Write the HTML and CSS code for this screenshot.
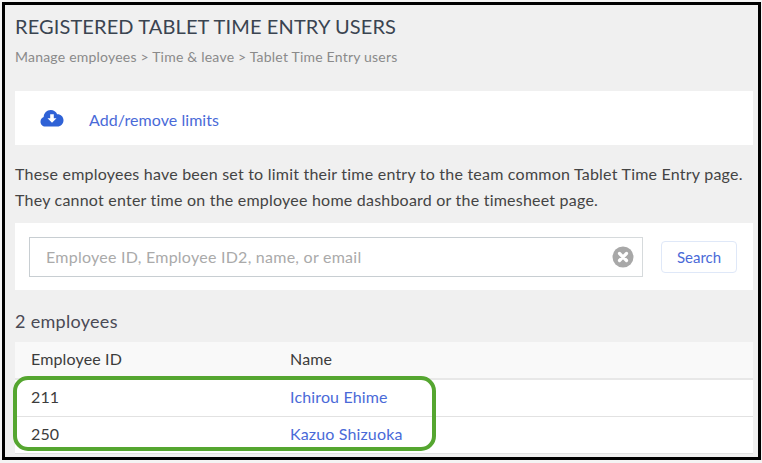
FILE: index.html
```html
<!DOCTYPE html>
<html lang="en">
<head>
    <meta charset="UTF-8">
    <title>Registered Tablet Time Entry Users</title>
    <link rel="stylesheet" href="styles.css">
</head>
<body>
    <div class="frame">
        <h1>REGISTERED TABLET TIME ENTRY USERS</h1>
        <p class="crumbs">Manage employees &gt; Time &amp; leave &gt; Tablet Time Entry users</p>

        <div class="panel limits">
            <svg class="cloud" width="24" height="18" viewBox="0 0 24 18">
                <path fill="#2f62d6" d="M5.5 17.5C2.4 17.5 0.5 15.3 0.5 12.7C0.5 10.5 1.8 8.8 3.7 8.1C3.7 4.2 6.8 1 10.8 1C13.7 1 16.1 2.7 17.2 5.2C20.6 5 23.5 7.7 23.5 11.2C23.5 14.7 20.8 17.5 17.4 17.5Z"/>
                <path fill="#fff" d="M10.2 5.2H13.8V9.2H16.5L12 13.8L7.5 9.2H10.2Z"/>
            </svg>
            <a href="#">Add/remove limits</a>
        </div>

        <p class="note">These employees have been set to limit their time entry to the team common Tablet Time Entry page.<br>They cannot enter time on the employee home dashboard or the timesheet page.</p>

        <div class="panel search">
            <div class="field">
                <span class="input">Employee ID, Employee ID2, name, or email</span>
                <span class="clear">
                    <svg width="22" height="22" viewBox="0 0 22 22">
                        <circle cx="11" cy="11" r="10.5" fill="#a8a8a8"/>
                        <path d="M7.5 7.5L14.5 14.5M14.5 7.5L7.5 14.5" stroke="#fff" stroke-width="3.2" stroke-linecap="round"/>
                    </svg>
                </span>
            </div>
            <button class="btn">Search</button>
        </div>

        <h2>2 employees</h2>

        <div class="table">
            <div class="row head"><span>Employee ID</span><span>Name</span></div>
            <div class="row"><span>211</span><a href="#">Ichirou Ehime</a></div>
            <div class="row"><span>250</span><a href="#">Kazuo Shizuoka</a></div>
            <div class="highlight"></div>
        </div>
    </div>
</body>
</html>
```

FILE: styles.css
```css
body {
    margin: 0;
    background: #f4f4f4;
    font-family: Lato, sans-serif;
    color: #3c3c3c;
}
a {
    color: #4a6ad8;
    text-decoration: none;
}
.frame {
    box-sizing: border-box;
    width: 759px;
    height: 458px;
    margin: 2px 0 0 2px;
    padding: 0 5px 0 10px;
    border: 3px solid #000;
    background: #f0f0f0;
}
h1 {
    margin: 0;
    padding-top: 9px;
    font-size: 20px;
    line-height: 24px;
    font-weight: 400;
    letter-spacing: 0.12px;
    color: #3a4450;
}
.crumbs {
    margin: 9px 0 0;
    font-size: 14px;
    line-height: 20px;
    letter-spacing: 0.21px;
    color: #8a8a8a;
}
.panel {
    background: #fff;
    display: flex;
    align-items: center;
}
.limits {
    height: 54px;
    margin-top: 24px;
    padding-left: 25px;
    font-size: 16px;
    letter-spacing: 0.05px;
}
.limits a {
    margin-top: 2px;
}
.cloud {
    margin-right: 25px;
}
.note {
    margin: 16px 0 0;
    font-size: 16px;
    line-height: 26px;
    letter-spacing: 0.22px;
    color: #444;
}
.search {
    height: 67px;
    margin-top: 10px;
    padding-left: 14px;
}
.field {
    width: 614px;
    height: 40px;
    display: flex;
    font-size: 16px;
    letter-spacing: 0.25px;
    color: #aaa;
}
.input {
    box-sizing: border-box;
    flex: 1;
    display: flex;
    align-items: center;
    padding-left: 16px;
    border: 1px solid #c8ced2;
    border-right: none;
}
.clear {
    box-sizing: border-box;
    width: 53px;
    display: flex;
    align-items: center;
    justify-content: flex-end;
    padding-right: 8px;
    border: 1px solid #d6dadc;
    border-left: none;
}
.btn {
    width: 76px;
    height: 32px;
    margin-left: 18px;
    border: 1px solid #dfe8f8;
    border-radius: 4px;
    background: #fff;
    color: #4a6ad8;
    font-family: Lato, sans-serif;
    font-size: 15px;
}
h2 {
    margin: 20px 0 0;
    font-size: 18px;
    line-height: 22px;
    font-weight: 400;
    letter-spacing: 0.3px;
    color: #4a4a55;
}
.table {
    position: relative;
    margin-top: 10px;
}
.row {
    box-sizing: border-box;
    display: grid;
    grid-template-columns: 259px 1fr;
    height: 37px;
    padding: 0 0 4px 16px;
    align-items: center;
    font-size: 16px;
    letter-spacing: 0.15px;
    background: #fff;
    border-bottom: 1px solid #e2e2e2;
}
.head {
    height: 38px;
    background: #f9f9f9;
    border-bottom: 2px solid #e8e8e8;
}
.highlight {
    position: absolute;
    left: -2px;
    top: 34px;
    width: 415px;
    height: 67px;
    border: 4px solid #55a630;
    border-radius: 15px;
}
```
